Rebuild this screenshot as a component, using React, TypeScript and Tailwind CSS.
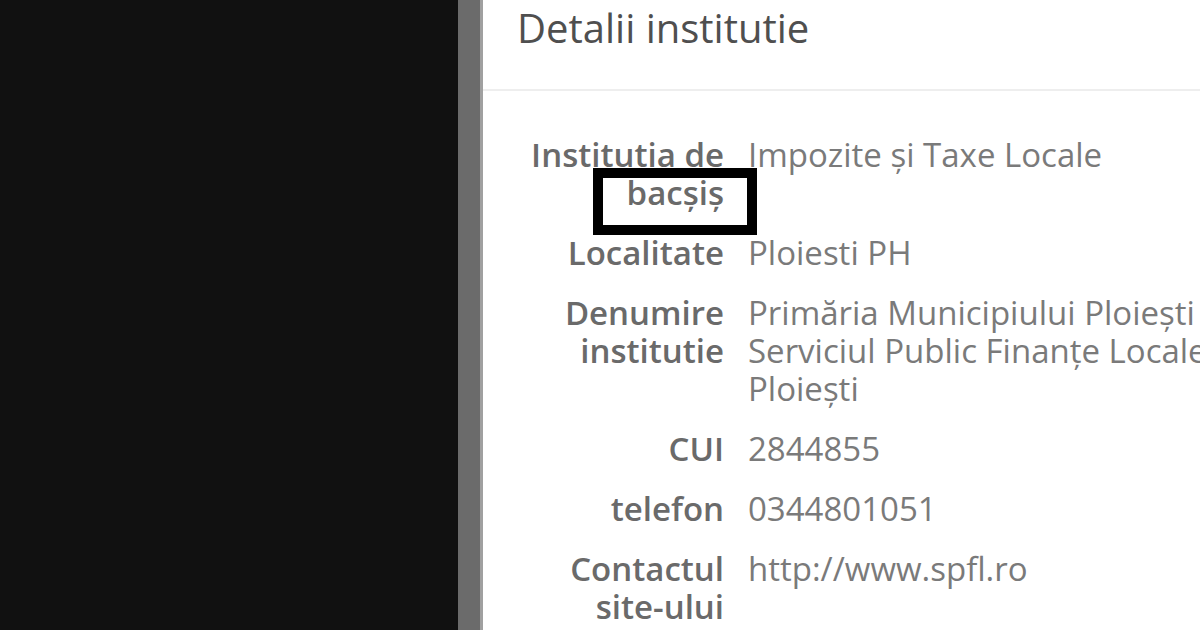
import React from 'react';

const ROWS: { label: string; value: React.ReactNode }[] = [
	{ label: 'Instituția de bacșiș', value: 'Impozite și Taxe Locale' },
	{ label: 'Localitate', value: 'Ploiesti PH' },
	{
		label: 'Denumire institutie',
		value: (
			<>
				<span className="block whitespace-nowrap">Primăria Municipiului Ploiești</span>
				<span className="block whitespace-nowrap">Serviciul Public Finanțe Locale</span>
				<span className="block whitespace-nowrap">Ploiești</span>
			</>
		),
	},
	{ label: 'CUI', value: '2844855' },
	{ label: 'telefon', value: '0344801051' },
	{ label: 'Contactul site-ului', value: 'http://www.spfl.ro' },
];

export default function App() {
	return (
		<div className="w-[1200px] h-[630px] overflow-hidden flex bg-[#111111] font-['Open_Sans',sans-serif]">
			{/* dark backdrop */}
			<div className="w-[458px] shrink-0 bg-[#111111]" />
			<div className="w-[22px] shrink-0 bg-[#6b6b6b]" />
			<div className="w-[3px] shrink-0 bg-[#a0a0a0]" />

			{/* panel */}
			<div className="flex-1 min-w-0 bg-white flex flex-col">
				<div className="pl-[34px] pt-[6px] h-[91px] border-b-2 border-[#eeeeee]">
					<h2 className="text-[40px] leading-[44px] text-[#4f4f4f] font-normal whitespace-nowrap">
						Detalii institutie
					</h2>
				</div>

				<div className="pl-[40px] pt-[45px] grid grid-cols-[201px_1fr] gap-x-[24px] gap-y-[22px] text-[33px] leading-[38px]">
					{ROWS.map((row, i) => (
						<React.Fragment key={row.label}>
							<div className="relative text-right font-semibold text-[#6a6a6a]">
								{row.label}
								{i === 0 && (
									<div className="absolute left-[70px] top-[32px] w-[164px] h-[67px] border-[10px] border-black" />
								)}
							</div>
							<div className="text-[#7a7a7a] whitespace-nowrap">{row.value}</div>
						</React.Fragment>
					))}
				</div>
			</div>
		</div>
	);
}
